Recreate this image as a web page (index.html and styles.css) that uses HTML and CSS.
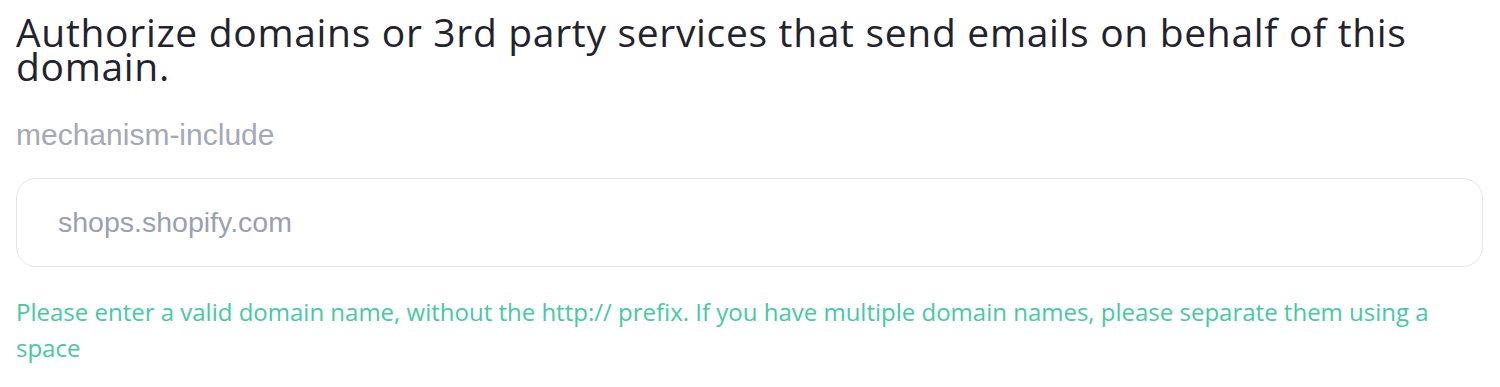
FILE: index.html
```html
<!DOCTYPE html>
<html lang="en">
<head>
<meta charset="utf-8">
<title>mechanism-include</title>
<link rel="stylesheet" href="styles.css">
</head>
<body>
<div class="field">
  <h2 class="title">Authorize domains or 3rd party services that send emails on behalf of this domain.</h2>
  <label class="label" for="inc">mechanism-include</label>
  <input class="input" id="inc" type="text" placeholder="shops.shopify.com">
  <p class="help">Please enter a valid domain name, without the http:// prefix. If you have multiple domain names, please separate them using a space</p>
</div>
</body>
</html>
```

FILE: styles.css
```css
html, body {
  margin: 0;
  padding: 0;
  background: #ffffff;
}
.field {
  display: flex;
  flex-direction: column;
  padding: 15px 17px 0 16px;
  width: 1467px;
  box-sizing: content-box;
}
.title {
  margin: 0;
  font-family: "Open Sans", sans-serif;
  font-weight: 400;
  font-size: 39px;
  letter-spacing: 0.68px;
  line-height: 34px;
  color: #23232e;
}
.label {
  margin-top: 35px;
  font-family: "Liberation Sans", Arial, sans-serif;
  font-size: 30px;
  line-height: 34px;
  color: #a4a8b8;
}
.input {
  margin-top: 26px;
  height: 89px;
  box-sizing: border-box;
  border: 1.5px solid #e6e6ee;
  border-radius: 20px;
  padding: 0 0 0 41px;
  font-family: "Liberation Sans", Arial, sans-serif;
  font-size: 28.5px;
  color: #9aa0b3;
  background: #fff;
  outline: none;
}
.input::placeholder {
  color: #9aa0b3;
  opacity: 1;
}
.help {
  margin: 27px 0 0;
  font-family: "Open Sans", sans-serif;
  font-size: 24px;
  line-height: 36px;
  color: #44caa3;
}
```
